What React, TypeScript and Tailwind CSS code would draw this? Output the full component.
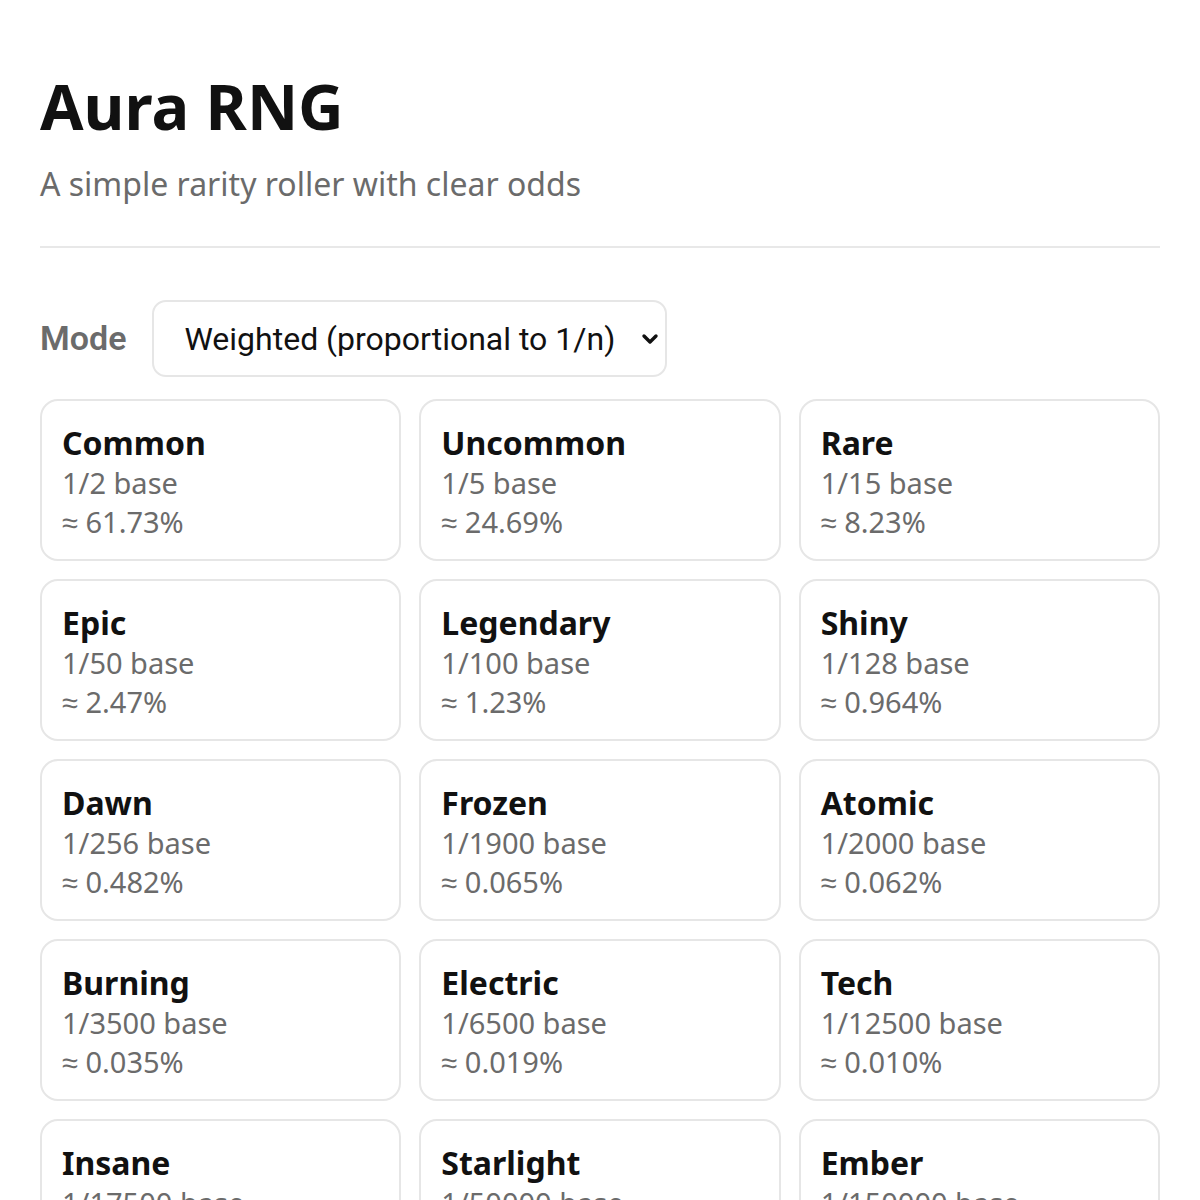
import { useState } from "react";

const auras = [
  { name: "Common", n: 2 },
  { name: "Uncommon", n: 5 },
  { name: "Rare", n: 15 },
  { name: "Epic", n: 50 },
  { name: "Legendary", n: 100 },
  { name: "Shiny", n: 128 },
  { name: "Dawn", n: 256 },
  { name: "Frozen", n: 1900 },
  { name: "Atomic", n: 2000 },
  { name: "Burning", n: 3500 },
  { name: "Electric", n: 6500 },
  { name: "Tech", n: 12500 },
  { name: "Insane", n: 17500 },
  { name: "Starlight", n: 50000 },
  { name: "Ember", n: 150000 },
];

function formatPct(p: number) {
  const v = p * 100;
  return v >= 1 ? v.toFixed(2) + "%" : v.toFixed(3) + "%";
}

function App() {
  const [mode, setMode] = useState("weighted");

  const total = auras.reduce((sum, a) => sum + 1 / a.n, 0);

  return (
    <main className="min-h-screen bg-white px-10 pt-[68px] pb-10 font-['Noto_Sans',sans-serif] text-[#111111]">
      <h1 className="text-[63px] font-bold leading-[76px]">Aura RNG</h1>
      <p className="mt-[20px] text-[32px] leading-[40px] text-[#6b6b6b]">
        A simple rarity roller with clear odds
      </p>

      <div className="mt-[42px] h-[2px] bg-[#e8e8e8]" />

      <div className="mt-[52px] flex items-center gap-[26px]">
        <label
          htmlFor="mode"
          className="font-['Roboto',sans-serif] text-[34px] font-semibold text-[#6b6b6b]"
        >
          Mode
        </label>
        <div className="relative">
          <select
            id="mode"
            value={mode}
            onChange={(e) => setMode(e.target.value)}
            className="h-[77px] w-[515px] appearance-none rounded-[14px] border-2 border-[#e6e6e6] bg-white pl-[30px] pr-12 font-['Roboto',sans-serif] text-[32px] text-[#111111] outline-none"
          >
            <option value="weighted">Weighted (proportional to 1/n)</option>
            <option value="independent">Independent (each 1/n)</option>
          </select>
          <svg
            className="pointer-events-none absolute right-[8px] top-1/2 h-[12px] w-[18px] -translate-y-1/2"
            viewBox="0 0 18 12"
            fill="none"
          >
            <path
              d="M3 3l6 6 6-6"
              stroke="#111111"
              strokeWidth="3.4"
              strokeLinecap="round"
              strokeLinejoin="round"
            />
          </svg>
        </div>
      </div>

      <div className="mt-[22px] grid grid-cols-3 gap-[18px]">
        {auras.map((aura) => (
          <div
            key={aura.name}
            className="rounded-[18px] border-2 border-[#e6e6e6] px-5 pt-[22px] pb-[18px]"
          >
            <p className="text-[32px] font-bold leading-[40px]">{aura.name}</p>
            <p className="text-[29px] leading-[39px] text-[#6b6b6b]">
              1/{aura.n} base
            </p>
            <p className="text-[29px] leading-[39px] text-[#6b6b6b]">
              ≈ {formatPct(1 / aura.n / total)}
            </p>
          </div>
        ))}
      </div>
    </main>
  );
}

export default App;
